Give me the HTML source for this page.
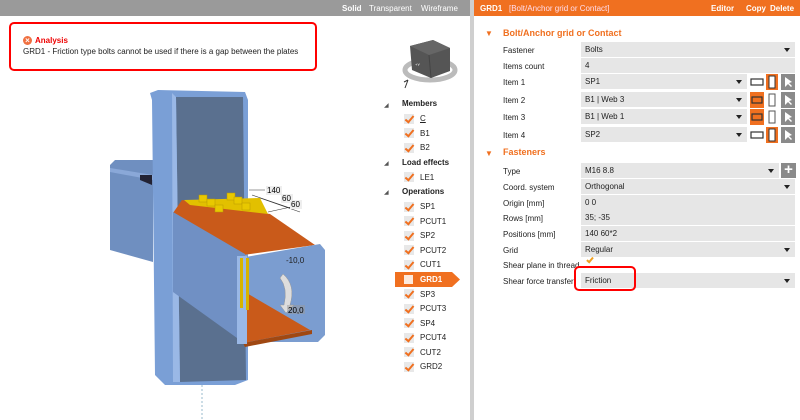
<!DOCTYPE html>
<html><head><meta charset="utf-8"><style>
*{margin:0;padding:0;box-sizing:border-box}
body{width:800px;height:420px;overflow:hidden;background:#fff;font-family:"Liberation Sans",sans-serif;font-size:8px;color:#222;position:relative}
.a{position:absolute;white-space:nowrap}
.lbl{position:absolute;left:503px;font-size:8px;color:#222}
.in{position:absolute;left:581px;height:15px;background:#e6e6e6;padding-left:4px;line-height:15px;font-size:8px}
.dd:after{content:"";position:absolute;right:5px;top:6px;border-left:3px solid transparent;border-right:3px solid transparent;border-top:4px solid #222}
.ti{position:absolute;font-size:8px}
.ck{position:absolute;left:404px;width:10px;height:10px;background:#e8e8e8}
.ck:after{content:"";position:absolute;left:3px;top:0px;width:3px;height:7px;border-right:2px solid #f07020;border-bottom:2px solid #f07020;transform:rotate(40deg)}
</style></head><body>
<div class="a" style="left:0;top:0;width:470px;height:16px;background:#9a9a9a"></div>
<div class="a" style="left:342px;top:4px;color:#fff;font-weight:bold">Solid</div>
<div class="a" style="left:369px;top:4px;color:#fff">Transparent</div>
<div class="a" style="left:421px;top:4px;color:#fff">Wireframe</div>
<div class="a" style="left:470px;top:0;width:4px;height:420px;background:#cfcfcf"></div>
<div class="a" style="left:474px;top:0;width:326px;height:16px;background:#f07020"></div>
<div class="a" style="left:480px;top:4px;color:#fff;font-weight:bold">GRD1</div>
<div class="a" style="left:509px;top:4px;color:#fde">[Bolt/Anchor grid or Contact]</div>
<div class="a" style="left:711px;top:4px;color:#fff;font-weight:bold">Editor</div>
<div class="a" style="left:746px;top:4px;color:#fff;font-weight:bold">Copy</div>
<div class="a" style="left:770px;top:4px;color:#fff;font-weight:bold">Delete</div>

<div class="a" style="left:9px;top:22px;width:308px;height:49px;border:2px solid #f00;border-radius:5px"></div>
<div class="a" style="left:23px;top:36px;width:9px;height:9px;border-radius:50%;background:#f07040;color:#fff;font-size:8px;line-height:9px;text-align:center;font-weight:bold">×</div>
<div class="a" style="left:35px;top:36px;color:#e00;font-weight:bold">Analysis</div>
<div class="a" style="left:23px;top:47px;color:#222">GRD1 - Friction type bolts cannot be used if there is a gap between the plates</div>

<svg class="a" style="left:395px;top:30px" width="70" height="60">
<ellipse cx="35" cy="40" rx="25" ry="10" fill="none" stroke="#bbb" stroke-width="5"/>
<polygon points="15,16 38,10 55,18 55,41 36,48 17,40" fill="#555"/>
<polygon points="15,16 38,10 55,18 34,25" fill="#666"/>
<line x1="34" y1="25" x2="36" y2="48" stroke="#444"/>
<text x="20" y="36" font-size="4" fill="#fff">+Y</text>
<path d="M10 58 L13 50 M13 50 L9 52" stroke="#333"/>
</svg>

<svg class="a" style="left:0;top:0" width="470" height="420">
<line x1="202" y1="385" x2="202" y2="420" stroke="#9bc" stroke-dasharray="2,2"/>
<polygon points="110,165 115,160 153,160 153,262 110,250" fill="#6f8fc0"/>
<polygon points="110,168 153,175 153,180 110,172" fill="#8aa8d8"/>
<polygon points="140,175 152,175 152,185 140,180" fill="#223"/>
<polygon points="150,93 158,90 245,92 248,100 248,380 235,385 165,385 155,375 152,100" fill="#7a9fd6"/>
<polygon points="176,97 243,97 246,380 180,382" fill="#5a708f"/>
<polygon points="172,93 176,97 180,382 173,382" fill="#9ab8e6"/>
<polygon points="173,213 182,200 270,214 315,245 243,255" fill="#c95a1a"/>
<polygon points="173,213 243,255 243,262 173,220" fill="#a04812"/>
<polygon points="173,212 245,254 248,342 237,338 173,292" fill="#7090c4"/>
<polygon points="240,258 320,244 325,250 325,335 318,342 245,342" fill="#7b9dd0"/>
<polygon points="238,288 310,330 243,343" fill="#c95a1a"/>
<polygon points="243,343 312,330 312,334 245,347" fill="#a04812"/>
<rect x="237" y="256" width="10" height="88" fill="#9ab8e6"/>
<rect x="240" y="258" width="3" height="50" fill="#d8b400"/>
<rect x="246" y="258" width="3" height="52" fill="#d8b400"/>
<polygon points="184,200 260,198 268,214 190,205" fill="#e2c000"/>
<g fill="#e8c800" stroke="#b89800" stroke-width=".5">
<rect x="199" y="195" width="8" height="7"/><rect x="207" y="199" width="8" height="7"/><rect x="215" y="205" width="8" height="7"/>
<rect x="227" y="193" width="8" height="7"/><rect x="234" y="197" width="8" height="7"/><rect x="242" y="203" width="8" height="7"/>
</g>
<path d="M249 190 L265 190 M252 195 L290 208 M260 198 L300 212 M268 212 L300 205" stroke="#333" stroke-width=".6" fill="none"/>
<rect x="266" y="186" width="16" height="9" fill="#eee"/><text x="267" y="193" font-size="8">140</text>
<rect x="281" y="194" width="12" height="9" fill="#eee"/><text x="282" y="201" font-size="8">60</text>
<rect x="290" y="200" width="12" height="9" fill="#eee"/><text x="291" y="207" font-size="8">60</text>
<text x="286" y="263" font-size="8" fill="#222">-10,0</text>
<path d="M283 274 Q296 285 290 305 L294 305 L286 313 L280 305 L284 305 Q288 288 280 278 Z" fill="#ddd" stroke="#999" stroke-width=".5"/>
<rect x="287" y="305" width="18" height="9" fill="#999" opacity=".5"/><text x="288" y="313" font-size="8">20,0</text>
</svg>

<!-- tree -->
<div class="a" style="left:384px;top:102px;font-size:6px;color:#555">◢</div>
<div class="ti" style="left:402px;top:99px;font-weight:bold">Members</div>
<div class="ck" style="top:114px"></div><div class="ti" style="left:420px;top:114px;text-decoration:underline">C</div>
<div class="ck" style="top:128px"></div><div class="ti" style="left:420px;top:129px">B1</div>
<div class="ck" style="top:143px"></div><div class="ti" style="left:420px;top:143px">B2</div>
<div class="a" style="left:384px;top:160px;font-size:6px;color:#555">◢</div>
<div class="ti" style="left:402px;top:158px;font-weight:bold">Load effects</div>
<div class="ck" style="top:172px"></div><div class="ti" style="left:420px;top:173px">LE1</div>
<div class="a" style="left:384px;top:189px;font-size:6px;color:#555">◢</div>
<div class="ti" style="left:402px;top:187px;font-weight:bold">Operations</div>
<div class="ck" style="top:202px"></div><div class="ti" style="left:420px;top:202px">SP1</div>
<div class="ck" style="top:216px"></div><div class="ti" style="left:420px;top:217px">PCUT1</div>
<div class="ck" style="top:231px"></div><div class="ti" style="left:420px;top:231px">SP2</div>
<div class="ck" style="top:245px"></div><div class="ti" style="left:420px;top:246px">PCUT2</div>
<div class="ck" style="top:260px"></div><div class="ti" style="left:420px;top:260px">CUT1</div>
<svg class="a" style="left:395px;top:272px" width="66" height="15"><polygon points="0,0 57,0 65,7.5 57,15 0,15" fill="#f07020"/><rect x="9" y="3" width="9" height="9" fill="#fff" opacity=".85"/></svg>
<div class="ti" style="left:420px;top:275px;color:#fff;font-weight:bold">GRD1</div>
<div class="ck" style="top:289px"></div><div class="ti" style="left:420px;top:290px">SP3</div>
<div class="ck" style="top:304px"></div><div class="ti" style="left:420px;top:304px">PCUT3</div>
<div class="ck" style="top:318px"></div><div class="ti" style="left:420px;top:319px">SP4</div>
<div class="ck" style="top:333px"></div><div class="ti" style="left:420px;top:333px">PCUT4</div>
<div class="ck" style="top:347px"></div><div class="ti" style="left:420px;top:348px">CUT2</div>
<div class="ck" style="top:362px"></div><div class="ti" style="left:420px;top:362px">GRD2</div>

<!-- right panel -->
<div class="a" style="left:485px;top:29px;color:#f07020;font-size:8px">▼</div>
<div class="a" style="left:503px;top:28px;color:#f07020;font-weight:bold;font-size:9px">Bolt/Anchor grid or Contact</div>
<div class="lbl" style="top:46px">Fastener</div><div class="in dd" style="top:42px;width:214px">Bolts</div>
<div class="lbl" style="top:62px">Items count</div><div class="in" style="top:58px;width:214px">4</div>
<div class="lbl" style="top:78px">Item 1</div><div class="in dd" style="top:74px;width:166px">SP1</div>
<div class="lbl" style="top:96px">Item 2</div><div class="in dd" style="top:92px;width:166px">B1 | Web 3</div>
<div class="lbl" style="top:113px">Item 3</div><div class="in dd" style="top:109px;width:166px">B1 | Web 1</div>
<div class="lbl" style="top:131px">Item 4</div><div class="in dd" style="top:127px;width:166px">SP2</div>
<svg class="a" style="left:750px;top:74px" width="46" height="70">
<g id="r1"><rect x="1" y="5" width="12" height="6" fill="none" stroke="#333" stroke-width="1.2"/><rect x="16" y="0" width="12" height="16" fill="#f07020"/><rect x="19" y="2" width="6" height="12" fill="#fff" stroke="#333"/><rect x="31" y="0" width="14" height="16" fill="#8a8a8a"/><path d="M35 3 L35 13 L38 10 L41 13 L42 12 L39 9 L42 8 Z" fill="#fff"/></g>
<g transform="translate(0,18)"><rect x="0" y="0" width="14" height="16" fill="#f07020"/><rect x="2" y="5" width="10" height="6" fill="none" stroke="#333" stroke-width="1.2"/><rect x="19" y="2" width="6" height="12" fill="#fff" stroke="#555"/><rect x="31" y="0" width="14" height="16" fill="#8a8a8a"/><path d="M35 3 L35 13 L38 10 L41 13 L42 12 L39 9 L42 8 Z" fill="#fff"/></g>
<g transform="translate(0,35)"><rect x="0" y="0" width="14" height="16" fill="#f07020"/><rect x="2" y="5" width="10" height="6" fill="none" stroke="#333" stroke-width="1.2"/><rect x="19" y="2" width="6" height="12" fill="#fff" stroke="#555"/><rect x="31" y="0" width="14" height="16" fill="#8a8a8a"/><path d="M35 3 L35 13 L38 10 L41 13 L42 12 L39 9 L42 8 Z" fill="#fff"/></g>
<use href="#r1" y="53"/>
</svg>

<div class="a" style="left:485px;top:149px;color:#f07020;font-size:8px">▼</div>
<div class="a" style="left:503px;top:147px;color:#f07020;font-weight:bold;font-size:9px">Fasteners</div>
<div class="lbl" style="top:167px">Type</div><div class="in dd" style="top:163px;width:198px">M16 8.8</div>
<div class="a" style="left:781px;top:163px;width:15px;height:15px;background:#8a8a8a;color:#fff;font-size:15px;line-height:14px;text-align:center;font-weight:bold">+</div>
<div class="lbl" style="top:183px">Coord. system</div><div class="in dd" style="top:179px;width:214px">Orthogonal</div>
<div class="lbl" style="top:199px">Origin [mm]</div><div class="in" style="top:195px;width:214px">0 0</div>
<div class="lbl" style="top:214px">Rows [mm]</div><div class="in" style="top:210px;width:214px">35; -35</div>
<div class="lbl" style="top:230px">Positions [mm]</div><div class="in" style="top:226px;width:214px">140 60*2</div>
<div class="lbl" style="top:246px">Grid</div><div class="in dd" style="top:242px;width:214px">Regular</div>
<div class="lbl" style="top:261px">Shear plane in thread</div>
<div class="a" style="left:588px;top:256px;width:4px;height:7px;border-right:2px solid #f0a020;border-bottom:2px solid #f0a020;transform:rotate(40deg)"></div>
<div class="lbl" style="top:277px">Shear force transfer</div><div class="in dd" style="top:273px;width:214px">Friction</div>
<div class="a" style="left:574px;top:266px;width:62px;height:25px;border:2px solid #f00;border-radius:5px"></div>
</body></html>
